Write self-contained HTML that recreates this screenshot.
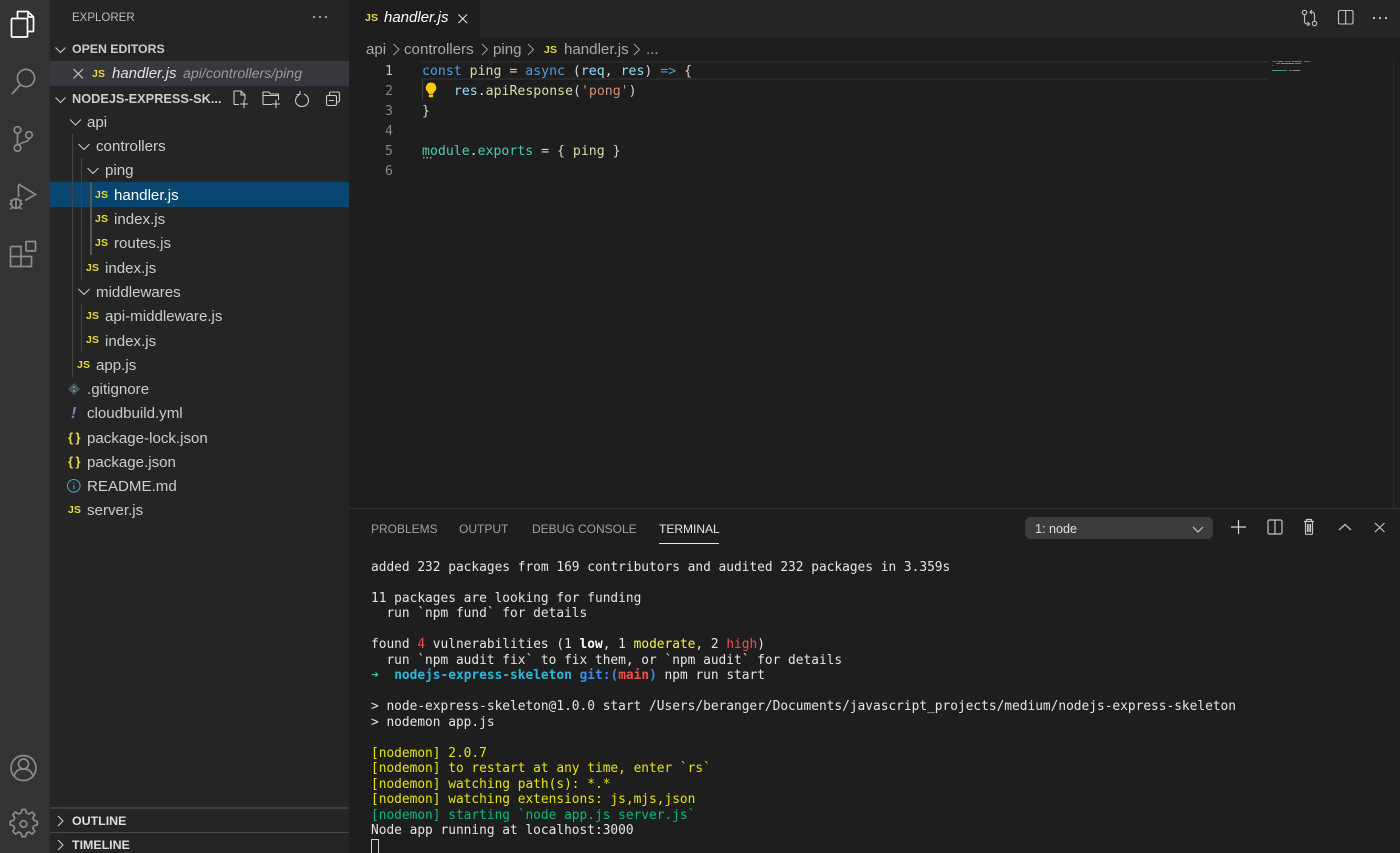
<!DOCTYPE html>
<html><head><meta charset="utf-8">
<style>
html,body{margin:0;padding:0;background:#1e1e1e;width:1400px;height:853px;overflow:hidden}
#r{position:relative;width:1400px;height:853px;overflow:hidden;font-family:"Liberation Sans",sans-serif;color:#ccc}
.a{position:absolute}
.t{position:absolute;white-space:pre;font-size:15px;line-height:20px;color:#ccc}
#tree .t{margin-top:1px;font-size:15.1px}
.js{position:absolute;white-space:pre;font-size:10.5px;line-height:12px;font-weight:bold;color:#e6da3c;letter-spacing:.2px}
.h{position:absolute;white-space:pre;font-size:12.4px;line-height:16px;font-weight:bold;color:#ccc}
.g{position:absolute;width:1px;background:#444}
.ln{position:absolute;left:370px;width:23px;text-align:right;font:13.2px/20px "DejaVu Sans Mono",monospace;color:#858585}
.c{position:absolute;left:422px;white-space:pre;font:13.2px/20px "DejaVu Sans Mono",monospace;color:#d4d4d4}
.tm{position:absolute;left:371px;margin-top:1px;white-space:pre;font:12.84px/16px "DejaVu Sans Mono",monospace;color:#e5e5e5}
.p{position:absolute;white-space:pre;font-size:12px;line-height:16px;color:#a0a0a0}
.b{position:absolute;white-space:pre;font-size:15.1px;line-height:16px;color:#a9a9a9}
.br{position:absolute;font:bold 13px/18px "Liberation Sans",sans-serif;color:#e6da3c}
svg{position:absolute;overflow:visible;fill:none}
</style></head><body><div id="r">
<div class="a" style="left:0;top:0;width:50px;height:853px;background:#333"></div>
<div class="a" style="left:50px;top:0;width:299px;height:853px;background:#252526"></div>
<div class="a" style="left:349px;top:0;width:1051px;height:37px;background:#252526"></div>
<div class="a" style="left:349px;top:0;width:131px;height:37px;background:#1e1e1e"></div>

<!-- activity bar -->
<svg style="left:0;top:0" width="50" height="280" stroke="#8c8c8c" stroke-width="1.7">
<g stroke="#fff" stroke-width="1.7" stroke-linejoin="round"><path d="M17.500 18V11.500h10.500l5.500 5.500V31.500H27.500"/><path d="M28 11.500v5.500h5.500"/><rect x="11.500" y="18.500" width="16" height="18.500" rx="1"/></g>
<circle cx="26" cy="78" r="8.600"/><path d="M20 85L12 94"/>
<circle cx="17.500" cy="130" r="3.300"/><circle cx="17.500" cy="148" r="3.300"/><circle cx="29" cy="135" r="3.300"/><path d="M17.500 133.500V144.500M29 138.500C28.500 143 21 141 19.500 145"/>
<path d="M18.500 185V197M18.500 184L35.500 194.500L25 200.500"/><circle cx="16" cy="203.500" r="4.800"/><path d="M16 199V208M10 200l2.500 2M22 200l-2.500 2M9.500 204h2M20.500 204h2M10.500 209l2-2M21.500 209l-2-2"/>
<path d="M10.500 246.500h10.500v20M10.500 246.500v20h21v-10h-21"/><rect x="26" y="241.500" width="9.500" height="9.500" rx=".5"/>
</svg>
<svg style="left:0;top:745px" width="50" height="108" stroke="#8c8c8c" stroke-width="1.700">
<circle cx="23.500" cy="23" r="12.500"/><circle cx="23.500" cy="19" r="5"/><path d="M14 31c2-6 5-7 9.500-7s7.500 1 9.500 7"/>
<circle cx="23.500" cy="79" r="3.300"/>
<path d="M21 68l1-3.500h3.500l1 3.500 2.500 1 3-2 2.800 2.800-2 3 1 2.500 3.500 1v3.500l-3.500 1-1 2.500 2 3-2.800 2.800-3-2-2.500 1-1 3.500h-3.500l-1-3.500-2.500-1-3 2-2.800-2.800 2-3-1-2.500-3.500-1v-3.500l3.500-1 1-2.500-2-3 2.800-2.800 3 2z" stroke-linejoin="round"/>
</svg>

<!-- sidebar headers -->
<div class="t" style="left:72px;top:8px;font-size:11.5px;color:#bbb">EXPLORER</div>
<svg style="left:312px;top:16px" width="16" height="4"><g fill="#ccc"><circle cx="2" cy="1" r="1"/><circle cx="8" cy="1" r="1"/><circle cx="14" cy="1" r="1"/></g></svg>
<svg style="left:54px;top:44.500px" width="14" height="10" stroke="#ccc" stroke-width="1.100"><path d="M1.500 2.500L6.500 7.500L11.500 2.500"/></svg>
<div class="h" style="left:72px;top:41px;font-size:12.3px">OPEN EDITORS</div>
<div class="a" style="left:50px;top:61px;width:299px;height:25px;background:#37373d"></div>
<svg style="left:72px;top:68px" width="12" height="12" stroke="#ccc" stroke-width="1.100"><path d="M1.500 1L11 10.500M11 1L1.500 10.500"/></svg>
<div class="js" style="left:92px;top:68px">JS</div>
<div class="t" style="left:112px;top:64px;font-style:italic;color:#e0e0e0">handler.js</div>
<div class="t" style="left:183px;top:64px;font-style:italic;font-size:14.2px;color:#9a9a9f">api/controllers/ping</div>
<svg style="left:54px;top:94.500px" width="14" height="10" stroke="#ccc" stroke-width="1.100"><path d="M1.500 2.500L6.500 7.500L11.500 2.500"/></svg>
<div class="h" style="left:72px;top:91px;font-size:12.75px">NODEJS-EXPRESS-SK...</div>
<svg style="left:232px;top:89px" width="112" height="20" stroke="#ccc" stroke-width="1.100">
<path d="M2 15.500V2h7l4 4v5M9 2v4h4M2 15.500h5M12 11v8M8 15h8"/>
<path d="M31 15.500V3h6l1.500 2h8v6M31 6.500h16M31 15.500h9M44 11v8M40 15h8"/>
<path d="M68 5c-3 2-4.500 4-4.500 6.500 0 3.500 3 6 6.500 6s6.500-2.500 6.500-6c0-2.500-1.500-5-4.500-6.500M68 2v3.500h-3.500"/>
<rect x="94.500" y="6.500" width="10" height="10" rx="1.500"/><path d="M97.500 6.500V4.500a1.500 1.500 0 0 1 1.500-1.500h7a1.500 1.500 0 0 1 1.500 1.500v7a1.500 1.500 0 0 1-1.500 1.500h-1.500M97 11.500h5"/>
</svg>

<!-- tree -->
<div class="a" style="left:50px;top:182px;width:299px;height:25px;background:#094771"></div>
<div id="tree" style="position:absolute;left:0;top:1px;width:349px;height:560px">
<div class="g" style="left:72px;top:133px;height:243px"></div>
<div class="g" style="left:81px;top:157px;height:121px"></div>
<div class="g" style="left:90px;top:181px;height:73px;background:#565656;width:1.500px"></div>
<div class="g" style="left:81px;top:303px;height:48px"></div>
<svg style="left:68px;top:112px" width="30" height="190" stroke="#ccc" stroke-width="1.100"><path d="M2 6.500L7.500 12L13 6.500M10.500 31L16 36.500L21.500 31M19.500 55L25 60.500L30.500 55M10.500 176L16 181.500L21.500 176"/></svg>
<div class="t" style="left:87px;top:111px">api</div>
<div class="t" style="left:96px;top:135px">controllers</div>
<div class="t" style="left:105px;top:159px">ping</div>
<div class="js" style="left:95px;top:187.500px">JS</div><div class="t" style="left:114px;top:184px;color:#fff">handler.js</div>
<div class="js" style="left:95px;top:212px">JS</div><div class="t" style="left:114px;top:208px">index.js</div>
<div class="js" style="left:95px;top:236px">JS</div><div class="t" style="left:114px;top:232px">routes.js</div>
<div class="js" style="left:86px;top:260.500px">JS</div><div class="t" style="left:105px;top:256.500px">index.js</div>
<div class="t" style="left:96px;top:281px">middlewares</div>
<div class="js" style="left:86px;top:309px">JS</div><div class="t" style="left:105px;top:305px">api-middleware.js</div>
<div class="js" style="left:86px;top:333px">JS</div><div class="t" style="left:105px;top:329.500px">index.js</div>
<div class="js" style="left:77px;top:357.500px">JS</div><div class="t" style="left:96px;top:354px">app.js</div>
<svg style="left:68px;top:382px" width="12" height="12"><path d="M6 0L12 6L6 12L0 6Z" fill="#41535b"/><circle cx="6" cy="4" r="1" fill="#8a9aa0"/><circle cx="6" cy="8" r="1" fill="#8a9aa0"/></svg>
<div class="t" style="left:87px;top:378px">.gitignore</div>
<div class="a" style="left:71px;top:403px;font:italic bold 16px/20px 'Liberation Sans',sans-serif;color:#a074c4">!</div>
<div class="t" style="left:87px;top:402px">cloudbuild.yml</div>
<div class="br" style="left:68px;top:428px">{</div><div class="br" style="left:75.500px;top:428px">}</div>
<div class="t" style="left:87px;top:426.500px">package-lock.json</div>
<div class="br" style="left:68px;top:452px">{</div><div class="br" style="left:75.500px;top:452px">}</div>
<div class="t" style="left:87px;top:450.500px">package.json</div>
<svg style="left:67px;top:478px" width="14" height="14" stroke="#519aba" stroke-width="1.100"><circle cx="6.800" cy="6.800" r="6.300"/><path d="M6.800 6v4.500M6.800 3.200v1.300"/></svg>
<div class="t" style="left:87px;top:475px">README.md</div>
<div class="js" style="left:68px;top:503px">JS</div><div class="t" style="left:87px;top:499px">server.js</div>
</div>

<div class="a" style="left:50px;top:807px;width:299px;height:2px;background:#3d3d3d"></div>
<div class="a" style="left:50px;top:832px;width:299px;height:1px;background:#4a4a4a"></div>
<svg style="left:56px;top:815px" width="10" height="36" stroke="#ccc" stroke-width="1.100"><path d="M2 1L7 6L2 11M2 25L7 30L2 35"/></svg>
<div class="h" style="left:72px;top:813px;color:#ddd">OUTLINE</div>
<div class="h" style="left:72px;top:837px;color:#ddd">TIMELINE</div>

<!-- tab -->
<div class="js" style="left:365px;top:12px">JS</div>
<div class="t" style="left:384px;top:8px;font-style:italic;color:#fff">handler.js</div>
<svg style="left:458px;top:14px" width="10" height="10" stroke="#e0e0e0" stroke-width="1.100"><path d="M.5 .5L9 9M9 .5L.5 9"/></svg>
<svg style="left:1302px;top:8px" width="90" height="20" stroke="#c5c5c5" stroke-width="1.100">
<circle cx="2.500" cy="4.500" r="2.200"/><circle cx="12.500" cy="15.500" r="2.200"/><path d="M2.500 7v6c0 2 1 3 3 3h1.500M5.500 14l2 2-2 2M12.500 13V7c0-2-1-3-3-3H8M10 2l-2 2 2 2"/>
<rect x="36.500" y="2.500" width="14.500" height="13.500" rx="1.500"/><path d="M43.700 2.500v13.500"/>
<g fill="#c5c5c5" stroke="none"><circle cx="72" cy="10" r="1.100"/><circle cx="78" cy="10" r="1.100"/><circle cx="84" cy="10" r="1.100"/></g>
</svg>

<!-- breadcrumb -->
<div class="b" style="left:366px;top:42px">api</div>
<div class="b" style="left:404px;top:42px">controllers</div>
<div class="b" style="left:493px;top:42px">ping</div>
<div class="js" style="left:544px;top:44px">JS</div>
<div class="b" style="left:564px;top:42px">handler.js</div>
<div class="b" style="left:646px;top:42px">...</div>
<svg style="left:390px;top:44px" width="250" height="12" stroke="#a0a0a0" stroke-width="1"><path d="M3.500 0L9 5.500L3.500 11M92 0L97.500 5.500L92 11M138 0L143.500 5.500L138 11M244 0L249.500 5.500L244 11"/></svg>

<!-- editor -->
<div class="a" style="left:421px;top:61px;width:847px;height:2px;background:#2a2a2a"></div>
<div class="a" style="left:421px;top:78px;width:847px;height:2px;background:#2a2a2a"></div>
<div class="a" style="left:421.500px;top:80px;width:1px;height:20px;background:#404040"></div>
<div class="ln" style="top:62px;color:#c6c6c6">1</div>
<div class="ln" style="top:82px">2</div>
<div class="ln" style="top:102px">3</div>
<div class="ln" style="top:122px">4</div>
<div class="ln" style="top:142px">5</div>
<div class="ln" style="top:162px">6</div>
<div class="c" style="top:62px"><span style="color:#569cd6">const</span> <span style="color:#dcdcaa">ping</span> = <span style="color:#569cd6">async</span> (<span style="color:#9cdcfe">req</span>, <span style="color:#9cdcfe">res</span>) <span style="color:#569cd6">=&gt;</span> {</div>
<div class="c" style="top:82px">  <span style="display:inline-block;width:16px"></span><span style="color:#9cdcfe">res</span>.<span style="color:#dcdcaa">apiResponse</span>(<span style="color:#ce9178">'pong'</span>)</div>
<div class="c" style="top:102px">}</div>
<div class="c" style="top:142px"><span style="color:#4ec9b0">module</span>.<span style="color:#4ec9b0">exports</span> = { <span style="color:#dcdcaa">ping</span> }</div>
<svg style="left:422px;top:156px" width="12" height="3"><g fill="#a0a0a0"><rect x="1" y="1" width="1.500" height="1.500"/><rect x="4.500" y="1" width="1.500" height="1.500"/><rect x="8" y="1" width="1.500" height="1.500"/></g></svg>
<svg style="left:424px;top:82px" width="14" height="16"><path d="M7 .5a5.300 5.300 0 0 0-3.300 9.400c.7.600.9 1 1 2h4.600c.1-1 .3-1.400 1-2A5.300 5.300 0 0 0 7 .5z" fill="#ffcc00"/><rect x="4.800" y="12.500" width="4.400" height="2.800" rx=".5" fill="#ffcc00"/></svg>

<!-- minimap -->
<svg style="left:1272px;top:60px" width="40" height="14"><g stroke-width="1">
<path d="M0 1.500h5" stroke="#3f6a8c"/><path d="M6 1.500h5" stroke="#8a8a6a"/><path d="M13 1.500h6" stroke="#3f6a8c"/><path d="M20 1.500h10" stroke="#5a7a8c"/><path d="M32 1.500h6" stroke="#3f6a8c"/>
<path d="M4 3.500h4" stroke="#5a7a8c"/><path d="M9 3.500h13" stroke="#8a8a6a"/><path d="M23 3.500h6" stroke="#9a6a50"/>
<path d="M0 5.500h1" stroke="#777"/><path d="M0 10.500h15" stroke="#3f9a85"/><path d="M17 10.500h3" stroke="#777"/><path d="M21 10.500h7" stroke="#8a8a6a"/></g></svg>
<div class="a" style="left:1393px;top:61px;width:7px;height:447px;border-left:1px solid #2c2c2c"></div>

<!-- panel -->
<div class="a" style="left:349px;top:508px;width:1051px;height:1px;background:#353535"></div>
<div class="p" style="left:371px;top:521px">PROBLEMS</div>
<div class="p" style="left:459px;top:521px">OUTPUT</div>
<div class="p" style="left:532px;top:521px">DEBUG CONSOLE</div>
<div class="p" style="left:659px;top:521px;color:#e7e7e7">TERMINAL</div>
<div class="a" style="left:659px;top:543px;width:60px;height:1px;background:#e7e7e7"></div>
<div class="a" style="left:1025px;top:517px;width:188px;height:22px;border-radius:6px;background:#3c3c3c"></div>
<div class="p" style="left:1035px;top:521px;font-size:12.6px;color:#e0e0e0">1: node</div>
<svg style="left:1192px;top:523px" width="190" height="14" stroke="#c5c5c5" stroke-width="1.200">
<path d="M1 4L6 9L11 4"/>
<path d="M46.500 -3V11M39 4H54" stroke="#d5d5d5"/>
<rect x="76" y="-3" width="14" height="14" rx="1.500"/><path d="M83 -3V11"/>
<path d="M112 -1.500h10M114.500 -1.500v-2h5v2M113.500 -1v11.500c0 .5.300 .8.800 .8h5.400c.5 0 .8-.3.800-.8V-1M115.500 1v8M117 1v8M118.500 1v8"/>
<path d="M147 7L153 1.500L159 7"/>
<path d="M183 0L192.500 9M192.500 0L183 9"/>
</svg>

<!-- terminal -->
<div class="tm" style="top:558.500px">added 232 packages from 169 contributors and audited 232 packages in 3.359s</div>
<div class="tm" style="top:589.500px">11 packages are looking for funding</div>
<div class="tm" style="top:605px">  run `npm fund` for details</div>
<div class="tm" style="top:636px">found <span style="color:#f14c4c">4</span> vulnerabilities (1 <b style="color:#fff">low</b>, 1 <span style="color:#f5f543">moderate</span>, 2 <span style="color:#f14c4c">high</span>)</div>
<div class="tm" style="top:651.500px">  run `npm audit fix` to fix them, or `npm audit` for details</div>
<div class="tm" style="top:667px"><b style="color:#23d18b">➜</b>  <b style="color:#29b8db">nodejs-express-skeleton</b> <b style="color:#3b8eea">git:(</b><b style="color:#f14c4c">main</b><b style="color:#3b8eea">)</b> npm run start</div>
<div class="tm" style="top:698px">&gt; node-express-skeleton@1.0.0 start /Users/beranger/Documents/javascript_projects/medium/nodejs-express-skeleton</div>
<div class="tm" style="top:713.500px">&gt; nodemon app.js</div>
<div class="tm" style="top:744.500px;color:#e5e510">[nodemon] 2.0.7</div>
<div class="tm" style="top:760px;color:#e5e510">[nodemon] to restart at any time, enter `rs`</div>
<div class="tm" style="top:775.500px;color:#e5e510">[nodemon] watching path(s): *.*</div>
<div class="tm" style="top:791px;color:#e5e510">[nodemon] watching extensions: js,mjs,json</div>
<div class="tm" style="top:806.500px;color:#0dbc79">[nodemon] starting `node app.js server.js`</div>
<div class="tm" style="top:822px">Node app running at localhost:3000</div>
<div class="a" style="left:371px;top:839px;width:8px;height:14px;border:1px solid #d0d0d0;box-sizing:border-box;border-bottom:0"></div>
</div></body></html>
